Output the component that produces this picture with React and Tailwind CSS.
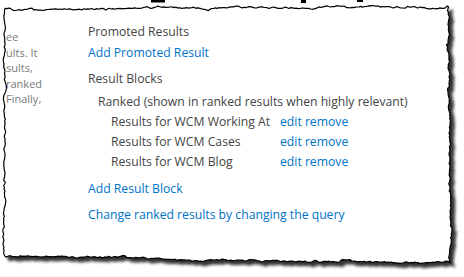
import React from "react";

function makeRand(seed) {
  let s = seed;
  return () => {
    s = (s * 1664525 + 1013904223) % 4294967296;
    return s / 4294967296;
  };
}

function tornPath() {
  const r = makeRand(12345);
  const corners = [
    [5, 9],
    [449, 7],
    [451, 263],
    [4, 256],
  ];
  const pts = [];
  for (let c = 0; c < 4; c++) {
    const [x0, y0] = corners[c];
    const [x1, y1] = corners[(c + 1) % 4];
    const len = Math.hypot(x1 - x0, y1 - y0);
    const n = Math.round(len / 1.8);
    const nx = -(y1 - y0) / len;
    const ny = (x1 - x0) / len;
    let off = 0;
    for (let i = 0; i < n; i++) {
      const t = i / n;
      off += (r() - 0.5) * 2.0;
      off *= 0.8;
      if (r() < 0.05) off += (r() - 0.5) * 4;
      const o = Math.max(-3, Math.min(3, off));
      pts.push([x0 + (x1 - x0) * t + nx * o, y0 + (y1 - y0) * t + ny * o]);
    }
  }
  return "M" + pts.map((p) => p[0].toFixed(1) + " " + p[1].toFixed(1)).join(" L") + " Z";
}

const PATH = tornPath();

export default function App() {
  const rows = [
    "Results for WCM Working At",
    "Results for WCM Cases",
    "Results for WCM Blog",
  ];
  return (
    <div className="relative w-[464px] h-[277px] overflow-hidden bg-white font-['Open_Sans','Liberation_Sans',sans-serif]">
      <svg className="absolute inset-0" width="464" height="277" viewBox="0 0 464 277">
        <defs>
          <filter id="sh" x="-5%" y="-5%" width="115%" height="120%">
            <feGaussianBlur in="SourceAlpha" stdDeviation="1.8" />
            <feOffset dx="4" dy="4" result="b" />
            <feComponentTransfer>
              <feFuncA type="linear" slope="0.8" />
            </feComponentTransfer>
            <feMerge>
              <feMergeNode />
              <feMergeNode in="SourceGraphic" />
            </feMerge>
          </filter>
        </defs>
        <path d={PATH} fill="#fff" stroke="#000" strokeWidth="1.2" strokeLinejoin="round" filter="url(#sh)" />
        <rect x="151" y="0" width="14" height="2.5" fill="#000" />
        <rect x="301" y="0" width="5" height="3" fill="#000" />
        <rect x="357" y="0" width="6" height="2" fill="#000" />
      </svg>
      <div className="relative flex">
        <div className="w-[88px] shrink-0 pl-[6px] pt-[29px] text-[11px] leading-[15.5px] text-[#7a7a7a]">
          <div>ee</div>
          <div>ults. It</div>
          <div>sults,</div>
          <div>ranked</div>
          <div>Finally,</div>
        </div>
        <div className="pt-[22px] text-[12.2px] leading-[20px] text-[#444444] whitespace-nowrap">
          <div>Promoted Results</div>
          <div className="mt-[1px] text-[#0072c6]">Add Promoted Result</div>
          <div className="mt-[6px]">Result Blocks</div>
          <div className="mt-[3px] pl-[10px]">Ranked (shown in ranked results when highly relevant)</div>
          <div className="pl-[23px] grid grid-cols-[169px_auto]">
            {rows.map((r) => (
              <React.Fragment key={r}>
                <div>{r}</div>
                <div className="text-[#0072c6]">edit remove</div>
              </React.Fragment>
            ))}
          </div>
          <div className="mt-[7px] text-[#0072c6]">Add Result Block</div>
          <div className="mt-[6px] text-[#0072c6]">Change ranked results by changing the query</div>
        </div>
      </div>
    </div>
  );
}
